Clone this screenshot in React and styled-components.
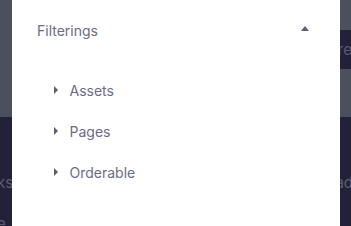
import styled, { createGlobalStyle } from "styled-components"

const GlobalStyle = createGlobalStyle`
  html, body {
    margin: 0;
    padding: 0;
    width: 351px;
    height: 226px;
    overflow: hidden;
    font-family: Inter, "Noto Sans", sans-serif;
  }
`

const filters = ['Assets', 'Pages', 'Orderable']

const App = () => {
  return(
    <>
      <GlobalStyle />
      <Page>
        <TopArea>
          <Spacer h={30} />
          <DarkBar><BarText>Explore</BarText></DarkBar>
        </TopArea>
        <BottomArea>
          <BottomRow>
            <BgText>Links</BgText>
            <BgText>Upload</BgText>
          </BottomRow>
          <BottomRow>
            <BgText>Line</BgText>
          </BottomRow>
        </BottomArea>
      </Page>
      <Panel>
        <Header>
          <Title>Filterings</Title>
          <UpArrow />
        </Header>
        <List>
          {filters.map(f => (
            <Item key={f}>
              <RightArrow />
              <ItemLabel>{f}</ItemLabel>
            </Item>
          ))}
        </List>
      </Panel>
    </>
  )
}

const Page = styled.div`
  width: 351px;
  height: 226px;
  display: flex;
  flex-direction: column;
  background-color: #23213a;
  overflow: hidden;
`

const TopArea = styled.div`
  height: 117px;
  flex-shrink: 0;
  background-color: #4c505d;
  display: flex;
  flex-direction: column;
`

const Spacer = styled.div`
  height: ${({h}) => h}px;
`

const DarkBar = styled.div`
  height: 39px;
  margin-left: 20px;
  background-color: #23213a;
  display: flex;
  align-items: center;
  justify-content: flex-end;
`

const BarText = styled.span`
  font-size: 15px;
  color: #565a6c;
  margin-right: -1px;
`

const BottomArea = styled.div`
  flex: 1;
  display: flex;
  flex-direction: column;
  padding-top: 56px;
  row-gap: 22px;
`

const BottomRow = styled.div`
  display: flex;
  justify-content: space-between;
`

const BgText = styled.span`
  font-size: 15px;
  color: #5b5d70;
  &:first-child {
    margin-left: -24px;
  }
  &:last-child:not(:first-child) {
    margin-right: -2px;
  }
`

const Panel = styled.div`
  position: absolute;
  top: 0;
  left: 12px;
  width: 328px;
  height: 226px;
  background-color: #FFFFFF;
  display: flex;
  flex-direction: column;
`

const Header = styled.div`
  height: 62px;
  padding: 0 31px 0 25px;
  display: flex;
  align-items: center;
  justify-content: space-between;
`

const Title = styled.span`
  font-size: 14px;
  font-weight: 400;
  color: #6b6c86;
  margin-top: -1px;
`

const UpArrow = styled.span`
  width: 0;
  height: 0;
  border-left: 4.5px solid transparent;
  border-right: 4.5px solid transparent;
  border-bottom: 5px solid #5d5e78;
  margin-top: -5px;
`

const List = styled.div`
  display: flex;
  flex-direction: column;
  padding: 17px 0 0 42px;
  row-gap: 19px;
`

const Item = styled.div`
  height: 22px;
  display: flex;
  align-items: center;
`

const RightArrow = styled.span`
  width: 0;
  height: 0;
  border-top: 4px solid transparent;
  border-bottom: 4px solid transparent;
  border-left: 4.5px solid #5d5e78;
  margin-right: 11.5px;
`

const ItemLabel = styled.span`
  font-size: 14px;
  font-weight: 400;
  color: #6b6c86;
`

export default App
